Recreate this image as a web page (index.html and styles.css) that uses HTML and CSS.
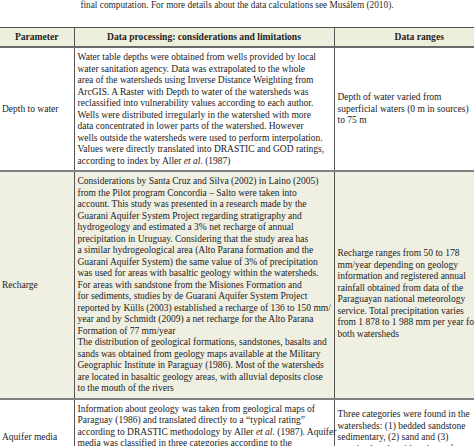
FILE: index.html
```html
<!DOCTYPE html>
<html>
<head>
<meta charset="utf-8">
<link rel="stylesheet" href="styles.css">
</head>
<body>
<div class="page">
  <p class="caption">final computation. For more details about the data calculations see Musálem (2010).</p>
  <table class="grid">
    <colgroup>
      <col class="c1">
      <col class="c2">
      <col class="c3">
    </colgroup>
    <thead>
      <tr>
        <th>Parameter</th>
        <th>Data processing: considerations and limitations</th>
        <th>Data ranges</th>
      </tr>
    </thead>
    <tbody>
      <tr class="plain">
        <td class="label">Depth to water</td>
        <td class="body">Water table depths were obtained from wells provided by local<br>water sanitation agency. Data was extrapolated to the whole<br>area of the watersheds using Inverse Distance Weighting from<br>ArcGIS. A Raster with Depth to water of the watersheds was<br>reclassified into vulnerability values according to each author.<br>Wells were distributed irregularly in the watershed with more<br>data concentrated in lower parts of the watershed. However<br>wells outside the watersheds were used to perform interpolation.<br>Values were directly translated into DRASTIC and GOD ratings,<br>according to index by Aller <i>et al</i>. (1987)</td>
        <td class="range">Depth of water varied from<br>superficial waters (0 m in sources)<br>to 75 m</td>
      </tr>
      <tr class="tint">
        <td class="label">Recharge</td>
        <td class="body">Considerations by Santa Cruz and Silva (2002) in Laino (2005)<br>from the Pilot program Concordia – Salto were taken into<br>account. This study was presented in a research made by the<br>Guarani Aquifer System Project regarding stratigraphy and<br>hydrogeology and estimated a 3% net recharge of annual<br>precipitation in Uruguay. Considering that the study area has<br>a similar hydrogeological area (Alto Parana formation and the<br>Guarani Aquifer System) the same value of 3% of precipitation<br>was used for areas with basaltic geology within the watersheds.<br>For areas with sandstone from the Misiones Formation and<br>for sediments, studies by de Guarani Aquifer System Project<br>reported by Külls (2003) established a recharge of 136 to 150 mm/<br>year and by Schmidt (2009) a net recharge for the Alto Parana<br>Formation of 77 mm/year<br>The distribution of geological formations, sandstones, basalts and<br>sands was obtained from geology maps available at the Military<br>Geographic Institute in Paraguay (1986). Most of the watersheds<br>are located in basaltic geology areas, with alluvial deposits close<br>to the mouth of the rivers</td>
        <td class="range shifted">Recharge ranges from 50 to 178<br>mm/year depending on geology<br>information and registered annual<br>rainfall obtained from data of the<br>Paraguayan national meteorology<br>service. Total precipitation varies<br>from 1 878 to 1 988 mm per year for<br>both watersheds</td>
      </tr>
      <tr class="plain">
        <td class="label">Aquifer media</td>
        <td class="body">Information about geology was taken from geological maps of<br>Paraguay (1986) and translated directly to a “typical rating”<br>according to DRASTIC methodology by Aller <i>et al</i>. (1987). Aquifer<br>media was classified in three categories according to the<br>geological formations present in both watersheds of<br>the study area</td>
        <td class="range">Three categories were found in the<br>watersheds: (1) bedded sandstone<br>sedimentary, (2) sand and (3)<br>massive basalt, with ratings of<br>6, 8 and 2 respectively</td>
      </tr>
    </tbody>
  </table>
</div>
</body>
</html>
```

FILE: styles.css
```css
html, body {
  margin: 0;
  padding: 0;
  background: #ffffff;
}

body {
  width: 474px;
  height: 446px;
  overflow: hidden;
  font-family: "Liberation Serif", "DejaVu Serif", serif;
  color: #222222;
}

.page {
  width: 504px;
}

.caption {
  margin: -1px 0 0 0;
  height: 12px;
  line-height: 12px;
  font-size: 9.3px;
  text-align: center;
  width: 474px;
  color: #2a2a2a;
  white-space: nowrap;
}

.grid {
  margin-top: 16px;
  width: 504px;
  border-collapse: collapse;
  table-layout: fixed;
  font-size: 9.5px;
  line-height: 11.5px;
}

.c1 { width: 74px; }
.c2 { width: 260px; }
.c3 { width: 170px; }

.grid th {
  background: #eeeedc;
  font-weight: bold;
  font-size: 9.6px;
  height: 18px;
  padding: 0;
  text-align: center;
  vertical-align: middle;
  border-top: 1px solid #555555;
  border-bottom: 2px solid #6a6a6a;
  border-left: 1px solid #555555;
  color: #1e1e1e;
}

.grid th:first-child,
.grid td:first-child {
  border-left: none;
}

.grid td {
  padding: 4px 3px 3px 3px;
  vertical-align: middle;
  white-space: nowrap;
  border-left: 1px solid #555555;
  border-bottom: 2px solid #808080;
}

.grid td.label {
  padding-left: 2px;
}

.grid td.body {
  vertical-align: top;
}

.grid td.shifted {
  padding-top: 22px;
}

.tint td {
  background: #f0f0e2;
}

.plain td {
  background: #ffffff;
}
```
